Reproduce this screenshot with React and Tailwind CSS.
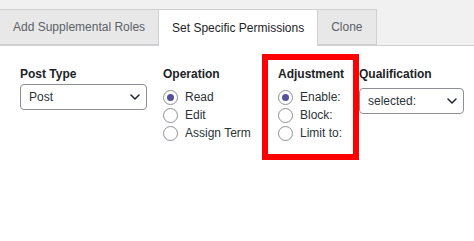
import React from 'react';

const font = { fontFamily: '"Liberation Sans", Arial, sans-serif' };

function Chevron() {
  return (
    <svg width="10" height="6" viewBox="0 0 10 6" fill="none" className="shrink-0">
      <path d="M1 1l4 4 4-4" stroke="#1d2327" strokeWidth="1.5" strokeLinecap="round" strokeLinejoin="round" />
    </svg>
  );
}

function Select({ value, className }) {
  return (
    <div className={`flex h-[26px] items-center justify-between rounded-[4px] border border-[#8c8f94] bg-white pl-[8px] pr-[6px] text-[12px] text-[#2c3338] ${className}`}>
      <span>{value}</span>
      <Chevron />
    </div>
  );
}

function Radio({ label, checked }) {
  return (
    <label className="flex h-[18px] items-center gap-[7px] text-[12px] text-[#2c3338]">
      <span className="flex h-[15px] w-[15px] items-center justify-center rounded-full border border-[#8c8f94] bg-white">
        {checked && <span className="h-[7px] w-[7px] rounded-full bg-[#55509c]" />}
      </span>
      {label}
    </label>
  );
}

function Tab({ label, active }) {
  return (
    <div
      className={
        active
          ? '-mb-px flex h-[37px] items-center border border-b-0 border-[#d0d0d2] bg-white px-[13px] text-[12px] text-[#1d2327]'
          : 'flex h-[36px] items-center border border-[#d0d0d2] bg-[#e8e8e9] px-[13px] text-[12px] text-[#5c6166]'
      }
    >
      {label}
    </div>
  );
}

export default function App() {
  return (
    <div className="h-[241px] w-[474px] overflow-hidden bg-white" style={font}>
      <div className="flex h-[46px] items-end border-b border-[#d0d0d2] bg-[#f1f1f1]">
        <div className="-ml-px flex">
          <Tab label="Add Supplemental Roles" />
          <div className="-ml-px"><Tab label="Set Specific Permissions" active /></div>
          <div className="-ml-px"><Tab label="Clone" /></div>
        </div>
      </div>

      <div className="flex items-start pl-[20px] pt-[8px]">
        <div className="mt-[13px] w-[127px]">
          <div className="text-[12px] font-bold leading-[14px] text-[#1d2327]">Post Type</div>
          <Select value="Post" className="mt-[3px]" />
        </div>

        <div className="ml-[16px] mt-[13px] w-[99px]">
          <div className="text-[12px] font-bold leading-[14px] text-[#1d2327]">Operation</div>
          <div className="mt-[7px] flex flex-col">
            <Radio label="Read" checked />
            <Radio label="Edit" />
            <Radio label="Assign Term" />
          </div>
        </div>

        <div className="w-[97px] border-[6px] border-[#f00] pb-[12px] pl-[10px] pt-[7px]">
          <div className="text-[12px] font-bold leading-[14px] text-[#1d2327]">Adjustment</div>
          <div className="mt-[7px] flex flex-col">
            <Radio label="Enable:" checked />
            <Radio label="Block:" />
            <Radio label="Limit to:" />
          </div>
        </div>

        <div className="mt-[13px] w-[105px]">
          <div className="text-[12px] font-bold leading-[14px] text-[#1d2327]">Qualification</div>
          <Select value="selected:" className="mt-[7px]" />
        </div>
      </div>
    </div>
  );
}
